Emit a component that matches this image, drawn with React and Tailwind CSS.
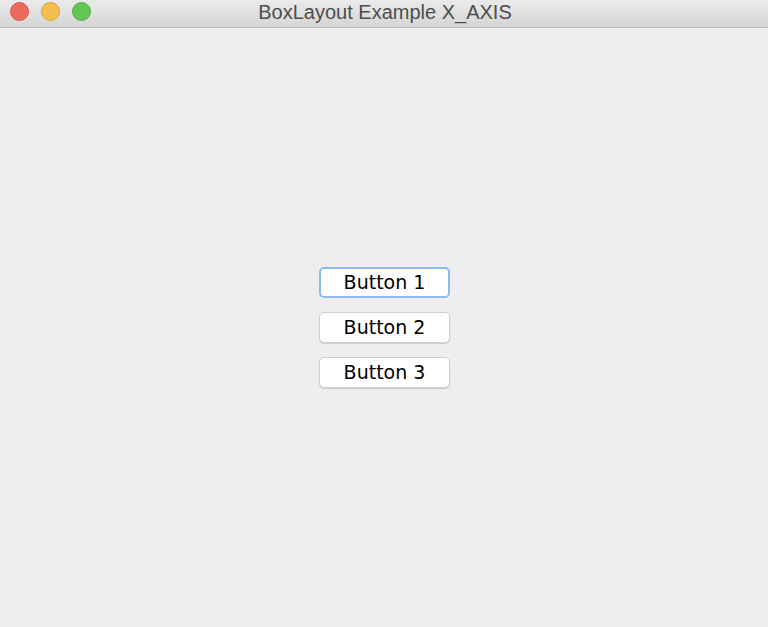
export default function App() {
  return (
    <div className="w-[768px] h-[627px] flex flex-col bg-[#eeeeee] overflow-hidden" style={{ fontFamily: '"Liberation Sans", Arial, sans-serif' }}>
      <div className="relative h-[28px] shrink-0 flex items-center justify-center bg-gradient-to-b from-[#ebebeb] to-[#d5d5d5] border-b border-[#b9b9b9]">
        <div className="absolute left-[10px] top-[2px] flex gap-[12px]">
          <div className="w-[19px] h-[19px] rounded-full bg-[#ee6a5f] border border-[#d9564b]" />
          <div className="w-[19px] h-[19px] rounded-full bg-[#f5bf4f] border border-[#dba53a]" />
          <div className="w-[19px] h-[19px] rounded-full bg-[#62c554] border border-[#4fae43]" />
        </div>
        <span className="text-[20px] text-[#4d4d4d] leading-none -mt-[4px] pl-[2px]">BoxLayout Example X_AXIS</span>
      </div>
      <div className="flex-1 flex flex-col items-center justify-center gap-[14px] pl-[1px]">
        <button className="w-[131px] h-[31px] bg-white rounded-[5px] border-[2px] border-[#8fbaf0] text-[19px] text-black leading-none" style={{ fontFamily: '"DejaVu Sans", sans-serif' }}>Button 1</button>
        <button className="w-[131px] h-[31px] bg-white rounded-[5px] border border-[#cfcfcf] shadow-[0_1px_1px_rgba(0,0,0,0.15)] text-[19px] text-black leading-none" style={{ fontFamily: '"DejaVu Sans", sans-serif' }}>Button 2</button>
        <button className="w-[131px] h-[31px] bg-white rounded-[5px] border border-[#cfcfcf] shadow-[0_1px_1px_rgba(0,0,0,0.15)] text-[19px] text-black leading-none" style={{ fontFamily: '"DejaVu Sans", sans-serif' }}>Button 3</button>
      </div>
    </div>
  );
}
